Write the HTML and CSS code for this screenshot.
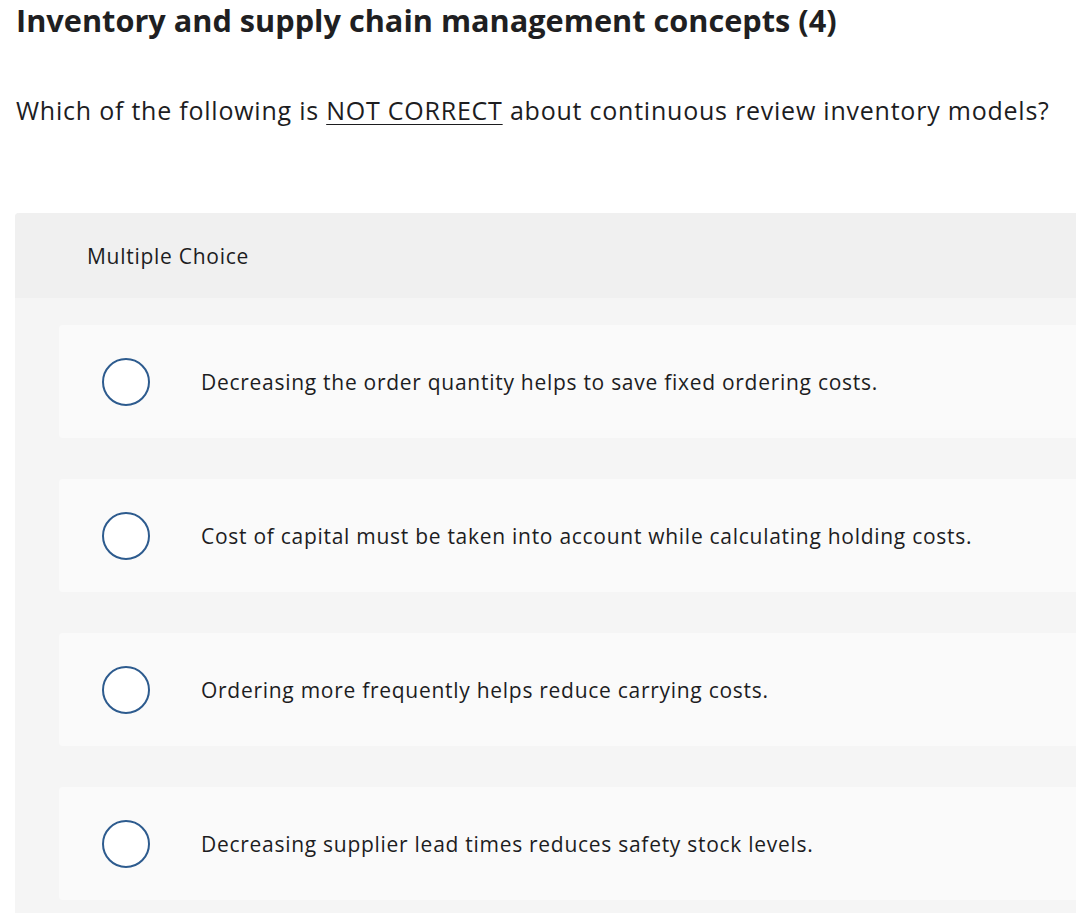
FILE: index.html
```html
<!DOCTYPE html>
<html lang="en">
<head>
<meta charset="utf-8">
<title>Inventory and supply chain management concepts (4)</title>
<link rel="stylesheet" href="styles.css">
</head>
<body>
<main class="page">
  <h1 class="title">Inventory and supply chain management concepts (4)</h1>
  <p class="question">Which of the following is <span class="emph">NOT CORRECT</span> about continuous review inventory models?</p>
  <section class="panel">
    <div class="panel-head">Multiple Choice</div>
    <div class="panel-body">
      <label class="option"><span class="radio"></span><span class="option-text">Decreasing the order quantity helps to save fixed ordering costs.</span></label>
      <label class="option"><span class="radio"></span><span class="option-text">Cost of capital must be taken into account while calculating holding costs.</span></label>
      <label class="option"><span class="radio"></span><span class="option-text">Ordering more frequently helps reduce carrying costs.</span></label>
      <label class="option"><span class="radio"></span><span class="option-text">Decreasing supplier lead times reduces safety stock levels.</span></label>
    </div>
  </section>
</main>
</body>
</html>
```

FILE: styles.css
```css
html, body {
  margin: 0;
  padding: 0;
  background: #ffffff;
  overflow: hidden;
}

body {
  font-family: "Open Sans", "Lato", sans-serif;
  color: #1d1d1f;
}

.page {
  width: 1110px;
  padding-left: 16px;
}

.title {
  margin: 0;
  padding-top: 0;
  font-size: 30.7px;
  line-height: 40px;
  font-weight: 700;
  color: #1f1f22;
}

.question {
  margin: 0;
  padding-top: 54px;
  font-size: 25px;
  line-height: 32px;
  letter-spacing: 0.77px;
  color: #1d1d1f;
}

.emph {
  text-decoration: underline;
  text-underline-offset: 4px;
  text-decoration-thickness: 1px;
}

.panel {
  margin-top: 87px;
  margin-left: -1px;
  border-radius: 4px 0 0 0;
  background: #f5f5f5;
  overflow: hidden;
}

.panel-head {
  height: 85px;
  display: flex;
  align-items: center;
  padding-left: 72px;
  background: #f0f0f0;
  font-size: 21px;
  letter-spacing: 0.72px;
  color: #1d1d1f;
}

.panel-body {
  display: flex;
  flex-direction: column;
  gap: 41px;
  padding: 27px 0 13px 44px;
}

.option {
  height: 113px;
  display: flex;
  align-items: center;
  background: #fafafa;
  border-radius: 4px 0 0 4px;
  cursor: pointer;
}

.radio {
  box-sizing: border-box;
  flex: none;
  width: 48px;
  height: 48px;
  margin-left: 43px;
  margin-right: 51px;
  border: 2px solid #2d5b8e;
  border-radius: 50%;
  background: #ffffff;
}

.option-text {
  font-size: 21px;
  letter-spacing: 0.72px;
  color: #1d1d1f;
}
```
